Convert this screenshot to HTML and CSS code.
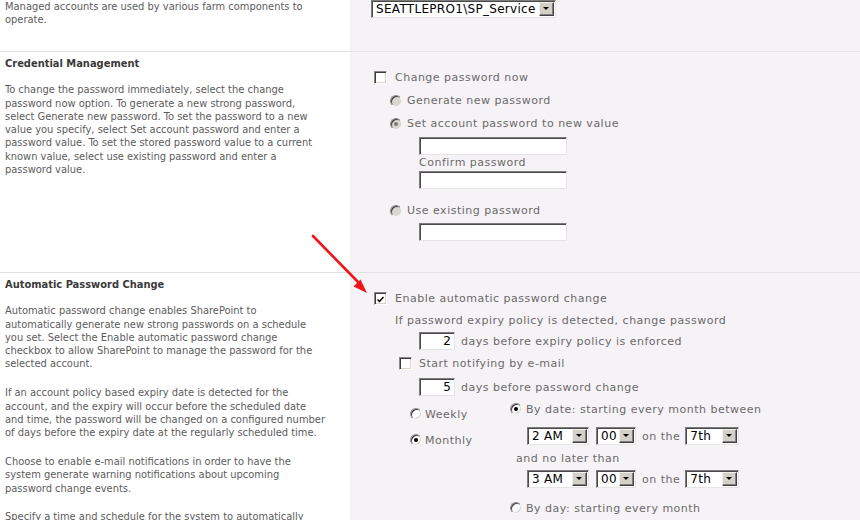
FILE: index.html
```html
<!DOCTYPE html>
<html>
<head>
<meta charset="utf-8">
<link rel="stylesheet" href="styles.css">
</head>
<body>
<div class="page">
  <section class="row row-top">
    <div class="desc">
      <p class="p-top">Managed accounts are used by various farm components to operate.</p>
    </div>
    <div class="ctrl ctrl-top">
      <span class="select sel-account"><span class="val">SEATTLEPRO1\SP_Service</span><span class="btn"></span></span>
    </div>
  </section>

  <section class="row row-cred">
    <div class="desc">
      <h3>Credential Management</h3>
      <p>To change the password immediately, select the change password now option. To generate a new strong password, select Generate new password. To set the password to a new value you specify, select Set account password and enter a password value. To set the stored password value to a current known value, select use existing password and enter a password value.</p>
    </div>
    <div class="ctrl">
      <div class="opt lvl0"><span class="cb"></span>Change password now</div>
      <div class="opt lvl1"><span class="rb dis"></span>Generate new password</div>
      <div class="opt lvl1"><span class="rb dis on"></span>Set account password to new value</div>
      <div class="field f-a"><span class="tb wide"></span></div>
      <div class="sublabel">Confirm password</div>
      <div class="field"><span class="tb wide"></span></div>
      <div class="opt lvl1 use-existing"><span class="rb dis"></span>Use existing password</div>
      <div class="field f-c"><span class="tb wide"></span></div>
    </div>
  </section>

  <section class="row row-auto">
    <div class="desc">
      <h3>Automatic Password Change</h3>
      <p>Automatic password change enables SharePoint to automatically generate new strong passwords on a schedule you set. Select the Enable automatic password change checkbox to allow SharePoint to manage the password for the selected account.</p>
      <p>If an account policy based expiry date is detected for the account, and the expiry will occur before the scheduled date and time, the password will be changed on a configured number of days before the expiry date at the regularly scheduled time.</p>
      <p>Choose to enable e-mail notifications in order to have the system generate warning notifications about upcoming password change events.</p>
      <p>Specify a time and schedule for the system to automatically change the password.</p>
    </div>
    <div class="ctrl">
      <div class="opt lvl0"><span class="cb checked"><svg viewBox="0 0 11 11" width="11" height="11"><path d="M2.5 5.5 L4.5 7.5 L8.5 3" fill="none" stroke="#000" stroke-width="1.4"/></svg></span>Enable automatic password change</div>
      <div class="line ind1">If password expiry policy is detected, change password</div>
      <div class="numrow"><span class="tb num">2</span><span class="after">days before expiry policy is enforced</span></div>
      <div class="opt notify"><span class="cb"></span>Start notifying by e-mail</div>
      <div class="numrow numrow-b"><span class="tb num">5</span><span class="after">days before password change</span></div>
      <div class="sched">
        <div class="freq">
          <div class="opt fr fr-w"><span class="rb"></span>Weekly</div>
          <div class="opt fr fr-m"><span class="rb on"></span>Monthly</div>
        </div>
        <div class="when">
          <div class="opt wh"><span class="rb on"></span>By date: starting every month between</div>
          <div class="selrow sr-a">
            <span class="select s-hour"><span class="val">2 AM</span><span class="btn"></span></span>
            <span class="select s-min"><span class="val">00</span><span class="btn"></span></span>
            <span class="onthe">on the</span>
            <span class="select s-day"><span class="val">7th</span><span class="btn"></span></span>
          </div>
          <div class="line nolater">and no later than</div>
          <div class="selrow">
            <span class="select s-hour"><span class="val">3 AM</span><span class="btn"></span></span>
            <span class="select s-min"><span class="val">00</span><span class="btn"></span></span>
            <span class="onthe">on the</span>
            <span class="select s-day"><span class="val">7th</span><span class="btn"></span></span>
          </div>
          <div class="opt wh byday"><span class="rb"></span>By day: starting every month</div>
        </div>
      </div>
    </div>
  </section>
</div>

<svg class="pointer" width="80" height="80" viewBox="0 0 80 80">
  <line x1="8" y1="6" x2="54" y2="53" stroke="#f0141a" stroke-width="2.6" stroke-linecap="round"/>
  <polygon points="62,63 48.5,56.5 55.5,49.5" fill="#f0141a"/>
</svg>
</body>
</html>
```

FILE: styles.css
```css
html, body {
  margin: 0;
  padding: 0;
  background: #ffffff;
}

.page {
  width: 860px;
  height: 520px;
  overflow: hidden;
  position: relative;
}

.row {
  display: grid;
  grid-template-columns: 350px 1fr;
  border-bottom: 1px solid #e1e1e1;
}

.row-top { height: 51px; }
.row-cred { height: 220px; }
.row-auto { height: 300px; border-bottom: none; }

.desc {
  background: #ffffff;
  padding: 5px 24px 0 5px;
  font-family: "DejaVu Sans Condensed", "DejaVu Sans", sans-serif;
  font-size: 11px;
  line-height: 13.3px;
  color: #5c5c5c;
}

.row-top .desc { padding-top: 0; }

.desc h3 {
  margin: 0 0 13px 0;
  font-size: 11px;
  line-height: 13.3px;
  font-weight: bold;
  color: #3a3a3a;
}

.desc p {
  margin: 0 0 15.5px 0;
}

.ctrl {
  background: #f6f3f6;
  padding: 14px 0 0 24px;
  font-family: "DejaVu Sans", Verdana, sans-serif;
  font-size: 11px;
  color: #6a6a6a;
  letter-spacing: 0.5px;
}

.ctrl-top { padding: 0 0 0 21px; }

/* option rows */
.opt {
  display: flex;
  align-items: center;
  height: 23px;
  white-space: nowrap;
}
.opt.lvl0 .cb { margin-right: 8px; }
.opt.lvl1 { margin-left: 16px; }
.opt.lvl1 .rb { margin-right: 5px; }
.use-existing { margin-top: 10px; }

.line {
  height: 22px;
  line-height: 22px;
  white-space: nowrap;
}
.ind1 { margin-left: 21px; }

.field {
  margin-left: 45px;
  height: 18px;
}
.f-a { margin-top: 2px; }
.f-c { margin-top: 1px; }

.sublabel {
  margin-left: 45px;
  height: 16px;
  line-height: 16px;
}

/* checkbox */
.cb {
  box-sizing: border-box;
  width: 13px;
  height: 13px;
  flex: none;
  background: #ffffff;
  border: 1px solid;
  border-color: #8a8a8a #ffffff #ffffff #8a8a8a;
  box-shadow: inset 1px 1px 0 #3c3c3c, inset -1px -1px 0 #d8d4cc;
  display: inline-flex;
  align-items: center;
  justify-content: center;
}
.cb svg { display: block; margin: 1px 0 0 0; }

/* radio */
.rb {
  box-sizing: border-box;
  width: 12px;
  height: 12px;
  flex: none;
  border-radius: 50%;
  background: #ffffff;
  border: 1px solid;
  border-color: #8a8a8a #f4f4f4 #f4f4f4 #8a8a8a;
  box-shadow: inset 1px 1px 0 #3c3c3c, inset -1px -1px 0 #d8d4cc;
  position: relative;
}
.rb.dis { background: #d9d6d0; }
.rb.on::after {
  content: "";
  position: absolute;
  left: 3px;
  top: 3px;
  width: 4px;
  height: 4px;
  border-radius: 50%;
  background: #000000;
}
.rb.dis.on::after { background: #7a7a7a; }

/* text box */
.tb {
  box-sizing: border-box;
  display: inline-block;
  height: 18px;
  background: #ffffff;
  border: 1px solid;
  border-color: #7c7c7c #e4e4e4 #e4e4e4 #7c7c7c;
  box-shadow: inset 1px 1px 0 #4a4a4a;
  vertical-align: top;
}
.tb.wide { width: 148px; }
.tb.num {
  width: 36px;
  text-align: right;
  padding-right: 3px;
  color: #000000;
  line-height: 16px;
  font-size: 12px;
  letter-spacing: 0;
}

.numrow {
  display: flex;
  align-items: center;
  height: 18px;
  margin-left: 45px;
  white-space: nowrap;
}
.numrow .after { margin-left: 6px; }
.numrow-b { margin-top: 4px; }

.notify {
  margin-left: 25px;
  margin-top: 2px;
  height: 22px;
}
.notify .cb { margin-right: 7px; }

/* select */
.select {
  box-sizing: border-box;
  display: inline-flex;
  align-items: center;
  justify-content: space-between;
  height: 18px;
  background: #ffffff;
  border: 1px solid;
  border-color: #7c7c7c #e4e4e4 #e4e4e4 #7c7c7c;
  box-shadow: inset 1px 1px 0 #4a4a4a;
  padding: 0 1px 0 4px;
  font-family: "DejaVu Sans", Verdana, sans-serif;
  font-size: 12px;
  letter-spacing: 0.3px;
  color: #000000;
  white-space: nowrap;
}
.select .btn {
  box-sizing: border-box;
  width: 15px;
  height: 14px;
  flex: none;
  background: #d4d0c8;
  border: 1px solid;
  border-color: #f0f0f0 #404040 #404040 #f0f0f0;
  box-shadow: inset -1px -1px 0 #808080;
  position: relative;
}
.select .btn::after {
  content: "";
  position: absolute;
  left: 3px;
  top: 4px;
  border-left: 3px solid transparent;
  border-right: 3px solid transparent;
  border-top: 3px solid #000000;
}
.sel-account { width: 185px; }
.s-hour { width: 62px; }
.s-min { width: 40px; }
.s-day { width: 54px; }

/* schedule */
.sched {
  display: flex;
  margin-top: 2px;
}
.freq {
  width: 100px;
  margin-left: 36px;
  padding-top: 5px;
}
.fr { height: 22px; }
.fr .rb { margin-right: 3px; }
.fr-m { margin-top: 4px; }

.wh { height: 22px; }
.wh .rb { margin-right: 4px; }

.selrow {
  display: flex;
  align-items: center;
  height: 18px;
  margin-left: 17px;
}
.sr-a { margin-top: 7px; }
.selrow .s-min { margin-left: 7px; }
.onthe { margin: 0 5px 0 6px; }
.nolater { margin-left: 6px; margin-top: 3px; }
.byday { margin-top: 9px; }

/* overlay annotation arrow */
.pointer {
  position: absolute;
  left: 305px;
  top: 230px;
}
```
